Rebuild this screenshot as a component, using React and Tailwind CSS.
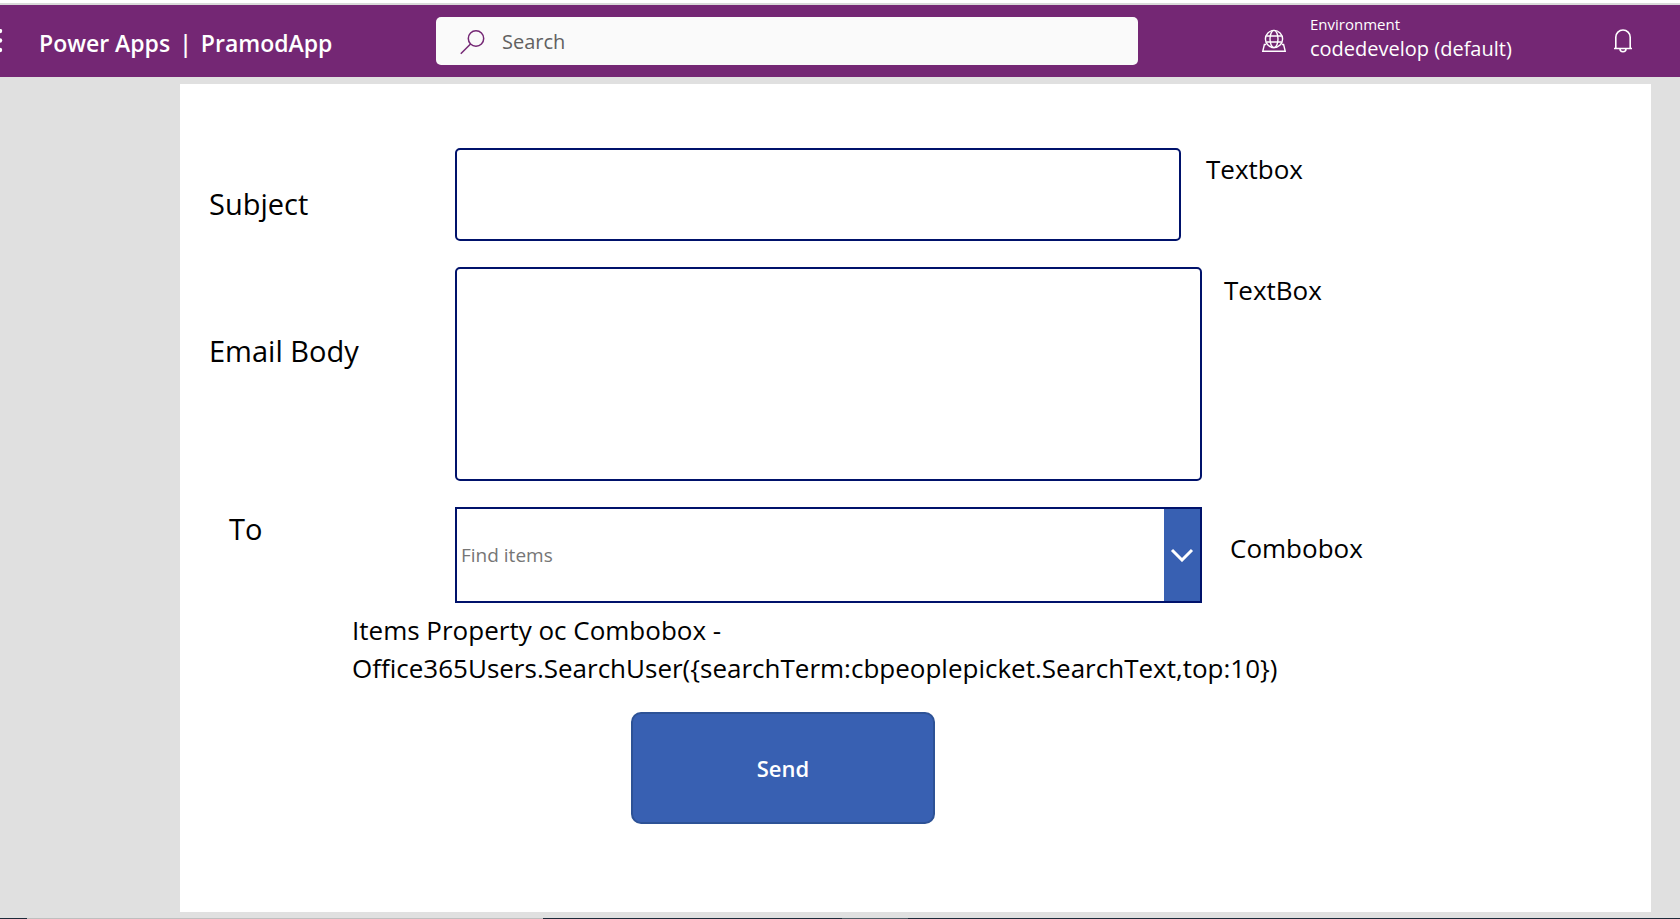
import { useState } from "react"

function SearchIcon() {
  return (
    <svg width="25" height="25" viewBox="0 0 25 25" fill="none" stroke="#742774" strokeWidth="1.5" aria-hidden="true">
      <circle cx="16" cy="8.5" r="7.7" />
      <path d="M10.5 14 L0.8 23.8" />
    </svg>
  )
}

function EnvironmentIcon() {
  return (
    <svg width="24" height="24" viewBox="0 0 24 24" fill="none" stroke="white" strokeWidth="1.4" aria-hidden="true">
      <circle cx="12" cy="10" r="8.6" />
      <ellipse cx="12" cy="10" rx="4" ry="8.6" />
      <path d="M4.3 7h15.4M4.3 13h15.4" />
      <path d="M4.2 15.5H2.4L0.8 22.2h22.4L21.6 15.5h-1.8" />
    </svg>
  )
}

function BellIcon() {
  return (
    <svg width="20" height="24" viewBox="0 0 20 24" fill="none" stroke="white" strokeWidth="1.6" aria-hidden="true">
      <path d="M1 19.5h18M2.8 19.5V8.2a7.2 7.2 0 0 1 14.4 0v11.3" />
      <path d="M7 19.8a3 3 0 0 0 6 0" />
    </svg>
  )
}

function Header() {
  return (
    <header className="flex h-[72px] items-center bg-[#742774] text-white">
      <button type="button" aria-label="App launcher" className="flex h-full w-[39px] items-center">
        <svg width="3" height="24" viewBox="0 0 3 24" fill="white" aria-hidden="true">
          <circle cx="0" cy="2" r="2.2" />
          <circle cx="0" cy="11.5" r="2.2" />
          <circle cx="0" cy="21" r="2.2" />
        </svg>
      </button>
      <div className="flex w-[397px] items-center gap-[9px] pt-1 text-[23px] font-semibold">
        <span>Power Apps</span>
        <span>|</span>
        <span>PramodApp</span>
      </div>
      <label className="flex h-12 flex-1 items-center gap-[17px] rounded-[5px] bg-[#fafafa] pt-[2px] pl-6">
        <SearchIcon />
        <input
          type="search"
          aria-label="Search"
          placeholder="Search"
          className="min-w-0 flex-1 bg-transparent text-[20px] text-black outline-none placeholder:text-[#616161]"
        />
      </label>
      <div className="ml-[124px] flex w-[351px] items-center gap-6">
        <EnvironmentIcon />
        <div className="pb-2">
          <p className="text-[15px] leading-6">Environment</p>
          <p className="text-[20px] leading-[26px]">codedevelop (default)</p>
        </div>
      </div>
      <button type="button" aria-label="Notifications" className="mr-[47px]">
        <BellIcon />
      </button>
    </header>
  )
}

function EmailForm() {
  const [to, setTo] = useState("")

  return (
    <form className="pt-[64px] pl-[29px] text-[26px] leading-[38px] text-black" onSubmit={(e) => e.preventDefault()}>
      <div className="grid grid-cols-[246px_1fr_449px] gap-y-[26px]">
        <label htmlFor="subject" className="pt-[37px] text-[29px] leading-[38px]">Subject</label>
        <input id="subject" className="mr-[21px] h-[93px] rounded-[5px] border-2 border-[#00126b] px-3 outline-none" />
        <p className="pt-[2px] pl-1">Textbox</p>

        <label htmlFor="body" className="pt-[65px] text-[29px] leading-[38px]">Email Body</label>
        <textarea id="body" className="h-[214px] resize-none rounded-[5px] border-2 border-[#00126b] px-3 outline-none" />
        <p className="pt-1 pl-[22px]">TextBox</p>

        <label htmlFor="to" className="pt-[3px] pl-5 text-[29px] leading-[38px]">To</label>
        <div className="flex h-[96px] border-2 border-[#00126b]">
          <input
            id="to"
            value={to}
            onChange={(e) => setTo(e.target.value)}
            placeholder="Find items"
            className="min-w-0 flex-1 px-1 text-[19px] outline-none placeholder:text-[#767676]"
          />
          <button type="button" aria-label="Show items" className="flex w-9 items-center justify-center bg-[#3860b2]">
            <svg width="24" height="14" viewBox="0 0 24 14" fill="none" stroke="white" strokeWidth="3" aria-hidden="true">
              <path d="M2 2l10 10L22 2" />
            </svg>
          </button>
        </div>
        <p className="pt-[22px] pl-7">Combobox</p>
      </div>

      <p className="pt-2 pl-[143px]">
        Items Property oc Combobox -<br />
        Office365Users.SearchUser(&#123;searchTerm:cbpeoplepicket.SearchText,top:10&#125;)
      </p>

      <button
        type="submit"
        className="mt-[25px] ml-[422px] h-[112px] w-[304px] rounded-[10px] border-2 border-[#2d5296] bg-[#3860b2] text-[22px] font-semibold text-white"
      >
        Send
      </button>
    </form>
  )
}

export default function App() {
  return (
    <div className="flex min-h-screen flex-col bg-[#e0e0e0] font-['Open_Sans','Noto_Sans',sans-serif]">
      <div className="h-[5px] border-b-2 border-[#d9d9d9] bg-white" />
      <Header />
      <main className="mt-[7px] mr-[29px] mb-[6px] ml-[180px] flex-1 bg-white">
        <EmailForm />
      </main>
      <div className="flex h-px bg-[#1c2b3a]">
        <span className="ml-[27px] w-[516px] bg-[#bfbfbf]" />
        <span className="ml-[299px] w-[66px] bg-[#4f5d66]" />
      </div>
    </div>
  )
}
